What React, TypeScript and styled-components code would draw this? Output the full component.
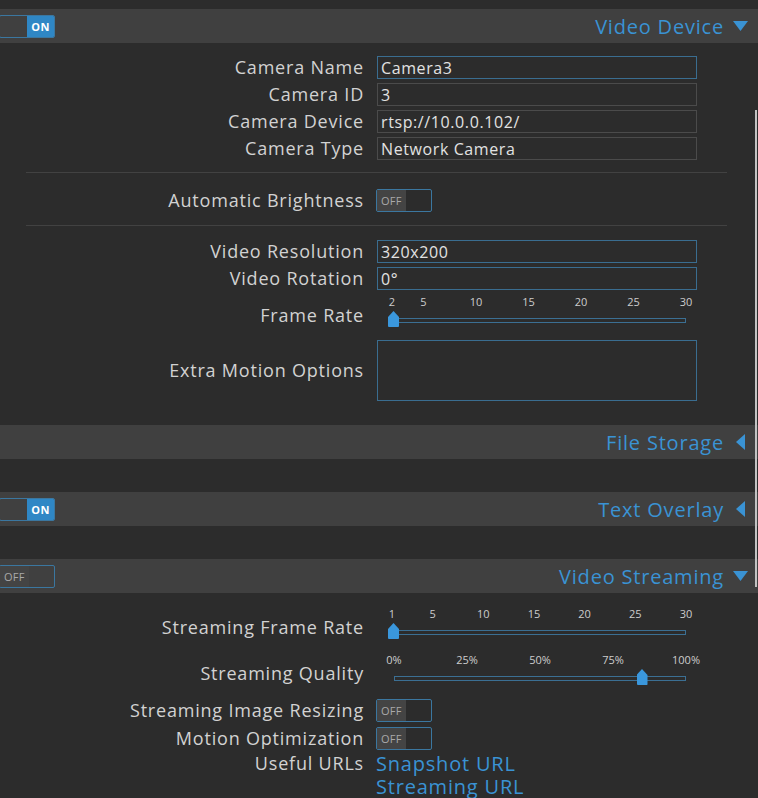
import React from 'react'
import styled, { createGlobalStyle } from 'styled-components'

const GlobalStyle = createGlobalStyle`
  html, body {
    margin: 0;
    padding: 0;
    background: #2c2c2c;
  }
  body {
    font-family: 'Open Sans', 'DejaVu Sans', sans-serif;
    overflow: hidden;
  }
`

const Page = styled.div`
  position: relative;
  width: 758px;
  height: 798px;
  padding-top: 9px;
  box-sizing: border-box;
  overflow: hidden;
  background: #2c2c2c;
`

const ScrollThumb = styled.div`
  position: absolute;
  right: 1px;
  top: 110px;
  width: 2px;
  height: 477px;
  background: #c2c2c2;
`

const SectionHeader = styled.div`
  display: flex;
  align-items: center;
  height: 34px;
  background: #404040;
  padding-right: 10px;
`

const HeaderTitle = styled.div`
  margin-left: auto;
  display: flex;
  align-items: center;
  gap: 9px;
  color: #3a93d4;
  font-size: 20px;
  letter-spacing: 0.8px;
`

const Body = styled.div<{ $empty?: boolean; $pb?: number }>`
  padding: ${({ $empty, $pb = 0 }) => ($empty ? '0' : `11px 31px ${$pb}px 26px`)};
  height: ${({ $empty }) => ($empty ? '33px' : 'auto')};
`

const Row = styled.div<{ $h: number; $top?: boolean }>`
  display: grid;
  grid-template-columns: 338px 321px;
  column-gap: 12px;
  align-items: ${({ $top }) => ($top ? 'start' : 'center')};
  height: ${({ $h }) => $h}px;
`

const Label = styled.div`
  text-align: right;
  color: #d2d2d2;
  font-size: 18px;
  line-height: 23px;
  letter-spacing: 0.8px;
  white-space: nowrap;
`

const Divider = styled.div`
  height: 1px;
  background: #424242;
  margin: 10px 0 12px;
`

const TextInput = styled.input<{ $focus?: boolean }>`
  display: block;
  width: 320px;
  height: 23px;
  margin-left: 1px;
  box-sizing: border-box;
  padding: 0 3px;
  border: 1px solid ${({ $focus }) => ($focus ? '#3a6d90' : '#4b4b4b')};
  border-radius: 0;
  background: #2c2c2c;
  color: #e2e2e2;
  font-family: 'Open Sans', 'DejaVu Sans', sans-serif;
  font-size: 16px;
  letter-spacing: 0.6px;
  outline: none;
`

const TextArea = styled.textarea`
  display: block;
  width: 320px;
  height: 61px;
  margin-left: 1px;
  box-sizing: border-box;
  border: 1px solid #3a6d90;
  background: #2c2c2c;
  color: #e2e2e2;
  resize: none;
  outline: none;
`

const SwitchBox = styled.div<{ $edge?: boolean }>`
  display: flex;
  width: 56px;
  height: 23px;
  box-sizing: border-box;
  margin-left: ${({ $edge }) => ($edge ? '-1px' : '0')};
  border: 1px solid #3b77a0;
  border-radius: 2px;
  overflow: hidden;
  font-size: 11px;
  line-height: 21px;
  letter-spacing: 0.3px;
`

const SwitchHalf = styled.div<{ $kind: 'off' | 'on' | 'blank' }>`
  width: 27px;
  flex: 1;
  padding-left: ${({ $kind }) => ($kind === 'off' ? '4px' : '0')};
  text-align: ${({ $kind }) => ($kind === 'off' ? 'left' : 'center')};
  background: ${({ $kind }) => ($kind === 'off' ? '#444444' : $kind === 'on' ? '#2f87c5' : 'transparent')};
  color: ${({ $kind }) => ($kind === 'on' ? '#ffffff' : '#a9a9a9')};
  font-weight: ${({ $kind }) => ($kind === 'on' ? 700 : 400)};
`

const SliderBox = styled.div<{ $inset: number; $w: number }>`
  height: 46px;
  padding-top: 3px;
  box-sizing: border-box;
  margin-left: ${({ $inset }) => $inset}px;
  width: ${({ $w }) => $w}px;
`

const Ticks = styled.div`
  position: relative;
  height: 13px;
`

const Tick = styled.span`
  position: absolute;
  top: 0;
  transform: translateX(-50%);
  font-size: 11px;
  line-height: 13px;
  color: #cdcdcd;
  white-space: nowrap;
`

const Track = styled.div`
  position: relative;
  height: 5px;
  margin-top: 10px;
  box-sizing: border-box;
  border: 1px solid #3b6f93;
  background: #2c2c2c;
`

const Handle = styled.div`
  position: absolute;
  top: -8px;
  width: 11px;
  height: 16px;
  margin-left: -5px;
  background: #3a97dc;
  border-radius: 1px;
  clip-path: polygon(50% 0, 100% 38%, 100% 100%, 0 100%, 0 38%);
`

const Links = styled.div`
  display: flex;
  flex-direction: column;
`

const UrlLink = styled.a`
  color: #3a93d4;
  font-size: 20px;
  line-height: 23px;
  letter-spacing: 0.8px;
  text-decoration: none;
  white-space: nowrap;
`

function Switch({ on, edge }: { on: boolean; edge?: boolean }) {
  return (
    <SwitchBox $edge={edge}>
      {on ? (
        <>
          <SwitchHalf $kind="blank" />
          <SwitchHalf $kind="on">ON</SwitchHalf>
        </>
      ) : (
        <>
          <SwitchHalf $kind="off">OFF</SwitchHalf>
          <SwitchHalf $kind="blank" />
        </>
      )}
    </SwitchBox>
  )
}

function Arrow({ open }: { open: boolean }) {
  return (
    <svg width="15" height="16" viewBox="0 0 15 16">
      {open ? <polygon points="0,3 15,3 7.5,13" fill="#3a93d4" /> : <polygon points="12,0 12,16 3,8" fill="#3a93d4" />}
    </svg>
  )
}

function Header({ title, open, toggle }: { title: string; open: boolean; toggle?: 'on' | 'off' }) {
  return (
    <SectionHeader>
      {toggle && <Switch on={toggle === 'on'} edge />}
      <HeaderTitle>
        {title}
        <Arrow open={open} />
      </HeaderTitle>
    </SectionHeader>
  )
}

function Slider({
  min,
  max,
  value,
  ticks,
  inset,
  width,
  suffix = '',
}: {
  min: number
  max: number
  value: number
  ticks: number[]
  inset: number
  width: number
  suffix?: string
}) {
  const pct = (v: number) => ((v - min) / (max - min)) * 100
  return (
    <SliderBox $inset={inset} $w={width}>
      <Ticks>
        {ticks.map((t) => (
          <Tick key={t} style={{ left: `${pct(t)}%` }}>
            {t}
            {suffix}
          </Tick>
        ))}
      </Ticks>
      <Track>
        <Handle style={{ left: `${pct(value)}%` }} />
      </Track>
    </SliderBox>
  )
}

export default function App() {
  return (
    <>
      <GlobalStyle />
      <Page>
        <Header title="Video Device" open toggle="on" />
        <Body $pb={23}>
          <Row $h={27}>
            <Label>Camera Name</Label>
            <TextInput $focus readOnly defaultValue="Camera3" />
          </Row>
          <Row $h={27}>
            <Label>Camera ID</Label>
            <TextInput readOnly defaultValue="3" />
          </Row>
          <Row $h={27}>
            <Label>Camera Device</Label>
            <TextInput readOnly defaultValue="rtsp://10.0.0.102/" />
          </Row>
          <Row $h={27}>
            <Label>Camera Type</Label>
            <TextInput readOnly defaultValue="Network Camera" />
          </Row>
          <Divider />
          <Row $h={30}>
            <Label>Automatic Brightness</Label>
            <Switch on={false} />
          </Row>
          <Divider />
          <Row $h={27}>
            <Label>Video Resolution</Label>
            <TextInput $focus readOnly defaultValue="320x200" />
          </Row>
          <Row $h={27}>
            <Label>Video Rotation</Label>
            <TextInput $focus readOnly defaultValue="0°" />
          </Row>
          <Row $h={46}>
            <Label>Frame Rate</Label>
            <Slider min={2} max={30} value={2} ticks={[2, 5, 10, 15, 20, 25, 30]} inset={16} width={294} />
          </Row>
          <Row $h={64}>
            <Label>Extra Motion Options</Label>
            <TextArea readOnly />
          </Row>
        </Body>

        <Header title="File Storage" open={false} />
        <Body $empty />

        <Header title="Text Overlay" open={false} toggle="on" />
        <Body $empty />

        <Header title="Video Streaming" open toggle="off" />
        <Body>
          <Row $h={46}>
            <Label>Streaming Frame Rate</Label>
            <Slider min={1} max={30} value={1} ticks={[1, 5, 10, 15, 20, 25, 30]} inset={16} width={294} />
          </Row>
          <Row $h={46}>
            <Label>Streaming Quality</Label>
            <Slider min={0} max={100} value={85} ticks={[0, 25, 50, 75, 100]} inset={18} width={292} suffix="%" />
          </Row>
          <Row $h={29}>
            <Label>Streaming Image Resizing</Label>
            <Switch on={false} />
          </Row>
          <Row $h={27}>
            <Label>Motion Optimization</Label>
            <Switch on={false} />
          </Row>
          <Row $h={46} $top>
            <Label>Useful URLs</Label>
            <Links>
              <UrlLink href="#">Snapshot URL</UrlLink>
              <UrlLink href="#">Streaming URL</UrlLink>
            </Links>
          </Row>
        </Body>
        <ScrollThumb />
      </Page>
    </>
  )
}
